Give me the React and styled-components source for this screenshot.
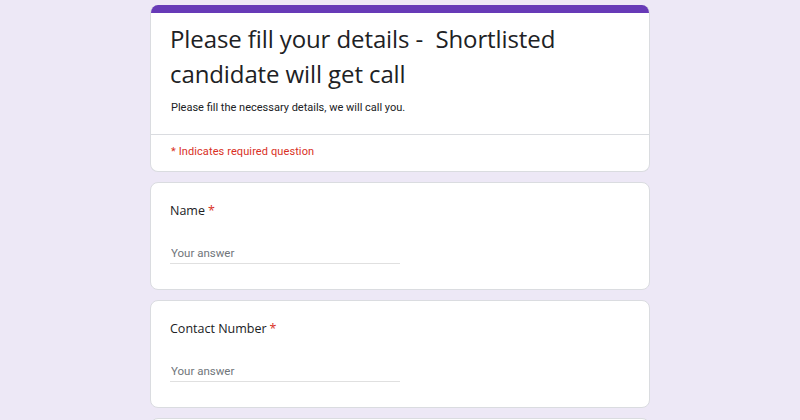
import React from "react";
import styled, { createGlobalStyle } from "styled-components";

const GlobalStyle = createGlobalStyle`
  html, body {
    margin: 0;
    padding: 0;
    overflow: hidden;
    background: #ede8f6;
  }
  body {
    font-family: Roboto, "Open Sans", Arial, sans-serif;
    color: #202124;
  }
`;

const Page = styled.div`
  min-height: 100vh;
  padding: 5px 0 20px;
  box-sizing: border-box;
`;

const FormColumn = styled.div`
  width: 500px;
  margin: 0 auto;
  display: flex;
  flex-direction: column;
  gap: 10px;
`;

const Card = styled.div`
  background: #ffffff;
  border: 1px solid #dadce0;
  border-radius: 8px;
  overflow: hidden;
  box-sizing: border-box;
`;

const HeaderCard = styled(Card)`
  border-top: none;
`;

const AccentBar = styled.div`
  height: 8px;
  background: #673ab7;
`;

const HeaderBody = styled.div`
  padding: 8px 20px 17px 19px;
`;

const Title = styled.h1`
  margin: 0;
  font-family: "Open Sans", Roboto, sans-serif;
  font-weight: 400;
  font-size: 24px;
  line-height: 35px;
  letter-spacing: -0.1px;
  color: #202124;
  white-space: pre-wrap;
`;

const Description = styled.p`
  margin: 8px 0 0 1px;
  font-size: 11px;
  line-height: 18px;
  color: #202124;
`;

const Divider = styled.div`
  height: 1px;
  background: #dadce0;
`;

const RequiredNote = styled.div`
  padding: 8px 20px 10px;
  font-size: 11px;
  line-height: 18px;
  letter-spacing: 0.1px;
  color: #d93025;
`;

const QuestionCard = styled(Card)`
  padding: 18px 20px 25px 19px;
`;

const Label = styled.div`
  font-family: "Open Sans", Roboto, sans-serif;
  font-size: 12.5px;
  line-height: 20px;
  color: #202124;
`;

const Star = styled.span`
  color: #d93025;
  margin-left: 3px;
`;

const AnswerInput = styled.input`
  display: block;
  margin-top: 21px;
  width: 230px;
  height: 22px;
  padding: 0 0 0 1px;
  border: none;
  border-bottom: 1px solid #e0e0e0;
  outline: none;
  background: transparent;
  font-family: Roboto, sans-serif;
  font-size: 11.5px;
  color: #202124;
  box-sizing: border-box;

  &::placeholder {
    color: #70757a;
  }
`;

const questions = [
  { id: "name", label: "Name", required: true },
  { id: "contact", label: "Contact Number", required: true },
  { id: "email", label: "Email", required: true },
];

export default function App() {
  return (
    <>
      <GlobalStyle />
      <Page>
        <FormColumn>
          <HeaderCard>
            <AccentBar />
            <HeaderBody>
              <Title>{"Please fill your details -  Shortlisted candidate will get call"}</Title>
              <Description>Please fill the necessary details, we will call you.</Description>
            </HeaderBody>
            <Divider />
            <RequiredNote>* Indicates required question</RequiredNote>
          </HeaderCard>

          {questions.map((q) => (
            <QuestionCard key={q.id}>
              <Label>
                {q.label}
                {q.required && <Star>*</Star>}
              </Label>
              <AnswerInput placeholder="Your answer" />
            </QuestionCard>
          ))}
        </FormColumn>
      </Page>
    </>
  );
}
